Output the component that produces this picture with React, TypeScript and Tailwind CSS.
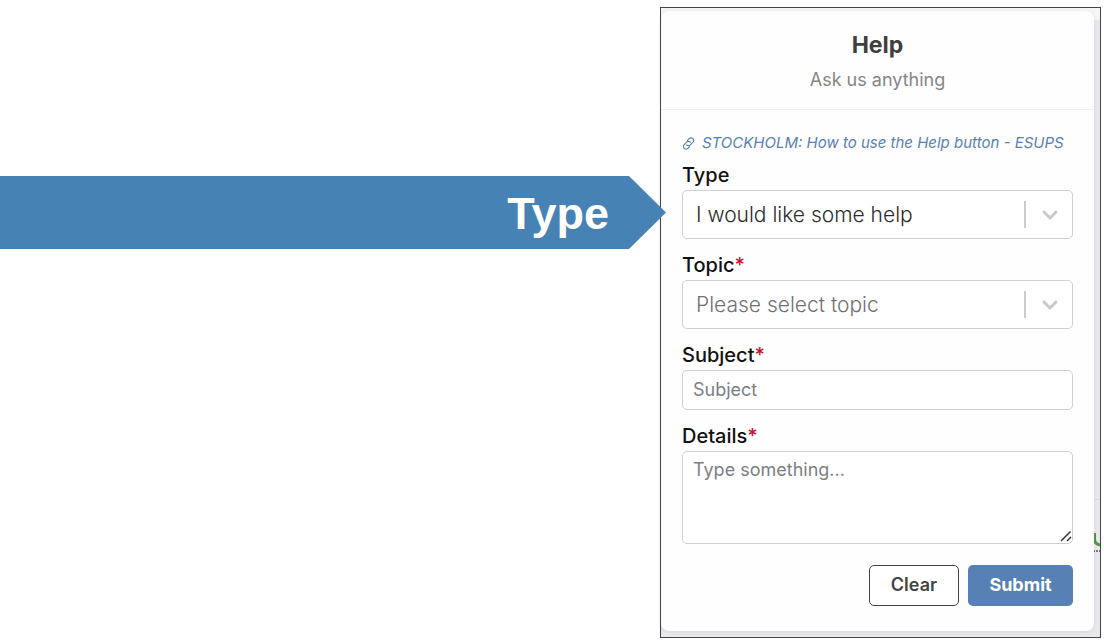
import React from "react";

const labelClass = "block text-xl leading-[30px] font-medium text-[#111111]";
const fieldClass =
  "block w-full rounded-[5px] border border-[#cfcfcf] bg-white px-[10px] text-lg text-[#444444] placeholder:text-[#7b7f85] placeholder:opacity-100";

function Required() {
  return <span className="text-[#c4122f]">*</span>;
}

interface SelectFieldProps {
  id: string;
  label: string;
  value: string;
  required?: boolean;
  muted?: boolean;
}

function SelectField({ id, label, value, required, muted }: SelectFieldProps) {
  return (
    <div>
      <label htmlFor={id} className={labelClass}>
        {label}
        {required && <Required />}
      </label>
      <div className="relative">
        <select
          id={id}
          className={
            "block h-[49px] w-full appearance-none rounded-[5px] border border-[#cfcfcf] bg-white pr-16 pl-[13px] text-[21px] font-light " +
            (muted ? "text-[#707070]" : "text-[#2c2c2c]")
          }
        >
          <option>{value}</option>
        </select>
        <div className="pointer-events-none absolute inset-y-0 right-[14px] flex items-center gap-[15px]">
          <span className="h-[27px] w-[2px] bg-[#cccccc]" />
          <svg width="18" height="12" viewBox="0 0 18 12" fill="none" aria-hidden="true">
            <path d="M3 3l6 6 6-6" stroke="#c8c8c8" strokeWidth="3" strokeLinecap="round" strokeLinejoin="round" />
          </svg>
        </div>
      </div>
    </div>
  );
}

function LinkIcon() {
  return (
    <svg width="13" height="13" viewBox="0 0 24 24" fill="none" stroke="#5781b3" strokeWidth="2" strokeLinecap="round" strokeLinejoin="round" className="shrink-0" aria-hidden="true">
      <path d="M15.500 9.500a4.800 4.800 0 0 0-6.800 0l-4.700 4.700a4.800 4.800 0 0 0 6.800 6.800l3.200-3.200" />
      <path d="M8.500 14.500a4.800 4.800 0 0 0 6.800 0l4.700-4.700a4.800 4.800 0 0 0-6.800-6.800l-3.200 3.200" />
    </svg>
  );
}

function Callout() {
  return (
    <div className="relative z-10 mt-[169px] -mr-[6px] flex h-[73px] min-w-0 flex-1">
      <div className="flex flex-1 items-center justify-end bg-[#4682b4] pr-5">
        <span className="pt-[2px] font-['Liberation_Sans',sans-serif] text-[45px] leading-[52px] font-bold text-white">Type</span>
      </div>
      <svg width="37" height="73" viewBox="0 0 37 73" className="shrink-0" aria-hidden="true">
        <path d="M0 0L37 36.500L0 73Z" fill="#4682b4" />
      </svg>
    </div>
  );
}

function Backdrop() {
  return (
    <div className="absolute inset-0 flex flex-col bg-[#e9e9ed]" aria-hidden="true">
      <div className="h-3 bg-[#f5f5f6]" />
      <div className="flex-1" />
      <div className="flex h-[138px] justify-end border-t border-[#d9d9de]">
        <svg width="7" height="60" viewBox="0 0 7 60">
          <path d="M1.500 33v6q0 5 5.500 6" fill="none" stroke="#4f9a43" strokeWidth="3" />
          <path d="M0 51h7" stroke="#555555" strokeWidth="1.5" strokeDasharray="2 1" />
        </svg>
      </div>
    </div>
  );
}

export default function App() {
  return (
    <main className="flex items-start bg-white pt-[7px] font-['Inter',sans-serif]">
      <Callout />
      <section className="relative mr-[3px] w-[441px] shrink-0 border border-[#444444]">
        <Backdrop />
        <div className="relative mt-[3px] mr-[6px] mb-[6px] rounded-lg bg-[#fefefe] shadow-[0_1px_5px_rgba(0,0,0,0.08)]">
          <header className="border-b border-[#f0f0f0] pt-[18px] pb-[15px] text-center">
            <h1 className="text-[23px] leading-8 font-bold text-[#3f3f3f]">Help</h1>
            <p className="pt-[5px] text-lg leading-7 text-[#858585]">Ask us anything</p>
          </header>
          <form className="flex flex-col gap-[11px] px-[21px] pt-[21px] pb-[25px]" onSubmit={(e) => e.preventDefault()}>
            <div>
              <a href="#help" className="flex h-6 items-center gap-[7px] text-[15px] whitespace-nowrap text-[#5781b3] italic">
                <LinkIcon />
                STOCKHOLM: How to use the Help button - ESUPS
              </a>
              <div className="pt-[5px]">
                <SelectField id="type" label="Type" value="I would like some help" />
              </div>
            </div>
            <SelectField id="topic" label="Topic" value="Please select topic" required muted />
            <div>
              <label htmlFor="subject" className={labelClass}>
                Subject
                <Required />
              </label>
              <input id="subject" type="text" placeholder="Subject" className={fieldClass + " h-10 pb-[2px]"} />
            </div>
            <div>
              <label htmlFor="details" className={labelClass}>
                Details
                <Required />
              </label>
              <div className="relative">
                <textarea id="details" placeholder="Type something..." className={fieldClass + " h-[93px] resize-none pt-1"} />
                <svg width="12" height="12" viewBox="0 0 12 12" className="pointer-events-none absolute right-[1px] bottom-[2px]" aria-hidden="true">
                  <path d="M1 11L10.500 1.500M7 11L11 7" stroke="#333333" strokeWidth="1.5" />
                </svg>
              </div>
            </div>
            <div className="flex justify-end gap-[9px] pt-[10px]">
              <button type="reset" className="h-[41px] w-[90px] rounded-[5px] border border-[#444444] bg-white pb-[2px] text-lg font-semibold text-[#444444]">
                Clear
              </button>
              <button type="submit" className="h-[41px] w-[105px] rounded-[5px] bg-[#5781b5] pb-[2px] text-lg font-bold text-white">
                Submit
              </button>
            </div>
          </form>
        </div>
      </section>
    </main>
  );
}
